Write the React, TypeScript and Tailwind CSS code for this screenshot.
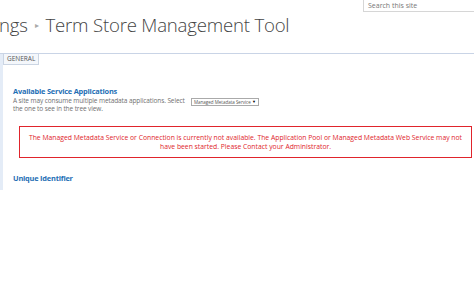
export default function App() {
  return (
    <div className="relative w-[474px] h-[287px] bg-white overflow-hidden" style={{ fontFamily: '"Open Sans", "Noto Sans", sans-serif' }}>
      <div className="absolute right-0 top-0 w-[111px] h-[12px] border-l border-b border-[#d6d6d6] bg-white pl-[4px] text-[7px] leading-[12px] text-[#777]">
        Search this site
      </div>
      <div className="h-[53px] flex items-start pt-[11px]">
        <div className="flex items-center text-[18.6px] font-light text-[#444] leading-[28px] -ml-[1px] whitespace-nowrap tracking-[-0.2px]">
          <span>ngs</span>
          <span className="mx-[7px] text-[8px] text-[#aaa]">▸</span>
          <span>Term Store Management Tool</span>
        </div>
      </div>
      <div className="border-t border-[#c9d4e6]" />
      <div className="flex">
        <div className="w-[3px] h-[136px] bg-[#e4ecf7]" />
        <div className="flex-1">
          <div className="w-fit border border-t-0 border-[#cbd5e3] bg-[#f4f7fb] px-[3px] text-[6.5px] leading-[10px] text-[#555]">
            GENERAL
          </div>
          <div className="pl-[10px] pt-[21px]">
            <div className="text-[7.4px] font-bold text-[#1f6fb5] leading-[11px] tracking-[-0.2px]">Available Service Applications</div>
            <div className="flex items-start">
              <div className="w-[178px] text-[6.5px] leading-[8px] text-[#707070] tracking-[-0.1px]">
                A site may consume multiple metadata applications. Select the one to see in the tree view.
              </div>
              <div className="mt-[1px] w-[68px] h-[8px] border border-[#aaa] flex items-center justify-between px-[2px] text-[4.5px] text-[#555] leading-none">
                <span>Managed Metadata Service</span>
                <span className="text-[4px] text-black">▼</span>
              </div>
            </div>
            <div className="ml-[6px] mr-[2px] mt-[13px] border border-[#e0242c] py-[6px] px-[6px] text-center text-[6.8px] leading-[9px] text-[#e0242c]">
              The Managed Metadata Service or Connection is currently not available. The Application Pool or Managed Metadata Web Service may not have been started. Please Contact your Administrator.
            </div>
            <div className="mt-[15px] text-[7.4px] font-bold text-[#1f6fb5] leading-[11px] tracking-[-0.2px]">Unique Identifier</div>
          </div>
        </div>
      </div>
    </div>
  );
}
